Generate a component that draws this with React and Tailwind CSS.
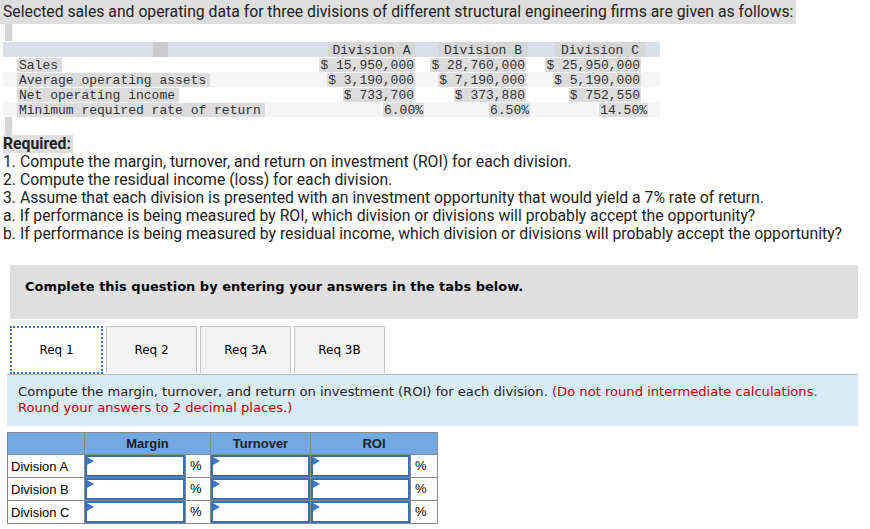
import React from "react";

const rows = [
  { label: "Sales", a: "$ 15,950,000", b: "$ 28,760,000", c: "$ 25,950,000", alt: false },
  { label: "Average operating assets", a: "$ 3,190,000", b: "$ 7,190,000", c: "$ 5,190,000", alt: true },
  { label: "Net operating income", a: "$ 733,700", b: "$ 373,880", c: "$ 752,550", alt: false },
  { label: "Minimum required rate of return", a: "6.00%", b: "6.50%", c: "14.50%", alt: true, pct: true },
];

const lines = [
  "1. Compute the margin, turnover, and return on investment (ROI) for each division.",
  "2. Compute the residual income (loss) for each division.",
  "3. Assume that each division is presented with an investment opportunity that would yield a 7% rate of return.",
  "a. If performance is being measured by ROI, which division or divisions will probably accept the opportunity?",
  "b. If performance is being measured by residual income, which division or divisions will probably accept the opportunity?",
];

const tabs = ["Req 1", "Req 2", "Req 3A", "Req 3B"];

function AnswerInput() {
  return (
    <div className="relative h-full border-2 border-[#3d6fb0] bg-white">
      <svg className="absolute left-0 top-0" width="7" height="8" viewBox="0 0 7 8">
        <polygon points="0,0 7,4 0,8" fill="#3b78c9" />
      </svg>
    </div>
  );
}

export default function App() {
  return (
    <div className="w-[870px] h-[529px] overflow-hidden bg-white text-[#222]">
      {/* intro */}
      <div className="font-['Roboto',sans-serif] text-[15.75px] leading-6 whitespace-nowrap">
        <span className="inline-block bg-[#dedede] pl-[3px] pr-[3px]">
          Selected sales and operating data for three divisions of different structural engineering firms are given as follows:
        </span>
      </div>
      <div className="ml-[5px] w-[7px] h-[17px] bg-[#d6d6d6]" />

      {/* data table */}
      <div className="mt-[1px] ml-[3px] w-[657px] font-['Liberation_Mono',monospace] text-[13px] leading-[15px] text-[#333] whitespace-nowrap">
        <div className="flex h-[15px] bg-[#dadfea]">
          <div className="w-[150px]" />
          <div className="w-[15px] bg-[#c9c9c9]" />
          <div className="w-[160px]" />
          <div className="w-[87px] bg-[#d6d6d6] text-center pt-[1px]">Division A</div>
          <div className="w-[23px]" />
          <div className="w-[90px] bg-[#d6d6d6] text-center pt-[1px]">Division B</div>
          <div className="w-[27px]" />
          <div className="w-[90px] bg-[#d6d6d6] text-center pt-[1px]">Division C</div>
        </div>
        {rows.map((r) => (
          <div key={r.label} className={`flex h-[15px] pt-[1px] ${r.alt ? "bg-[#f5f5f5]" : "bg-white"}`}>
            <div className="w-[316px] shrink-0 pl-[14px]">
              <span className="inline-block h-[14px] bg-[#dcdcdc] pl-[2px] pr-[4px]">{r.label}</span>
            </div>
            <div className={`shrink-0 text-right ${r.pct ? "w-[105px]" : "w-[96px]"}`}>
              <span className="inline-block h-[14px] bg-[#dcdcdc] pl-[1px] pr-[1px]">{r.a}</span>
            </div>
            <div className={`shrink-0 text-right ${r.pct ? "w-[106px]" : "w-[111px]"}`}>
              <span className="inline-block h-[14px] bg-[#dcdcdc] pl-[1px] pr-[1px]">{r.b}</span>
            </div>
            <div className={`shrink-0 text-right ${r.pct ? "w-[118px]" : "w-[115px]"}`}>
              <span className="inline-block h-[14px] bg-[#dcdcdc] pl-[1px] pr-[1px]">{r.c}</span>
            </div>
          </div>
        ))}
      </div>
      <div className="ml-[5px] w-[7px] h-[18px] bg-[#d6d6d6]" />

      {/* required */}
      <div className="font-['Roboto',sans-serif] text-[15.75px] leading-[18px] pl-[3px] whitespace-nowrap">
        <div>
          <span className="inline-block bg-[#dedede] font-bold pr-[2px]">Required:</span>
        </div>
        {lines.map((l) => (
          <div key={l}>{l}</div>
        ))}
      </div>

      {/* tabs area */}
      <div className="mt-[22px] ml-[10px] w-[848px] h-[54px] bg-[#e0e0e0] pl-[15px] pt-[12px] font-['DejaVu_Sans',sans-serif] font-bold text-[13px] text-black">
        Complete this question by entering your answers in the tabs below.
      </div>

      <div className="mt-[7px] ml-[10px] flex gap-[2px] font-['DejaVu_Sans',sans-serif] text-[12px] text-black">
        {tabs.map((t, i) => (
          <div
            key={t}
            className={
              i === 0
                ? "w-[93px] h-[48px] flex items-center justify-center bg-white border-2 border-dotted border-[#3a72c4]"
                : "w-[91px] h-[47px] flex items-center justify-center bg-[#f2f2f2] border border-b-0 border-[#c4c4c4] ml-[1px]"
            }
          >
            {t}
          </div>
        ))}
      </div>

      <div className="ml-[7px] w-[851px] h-[52px] bg-[#d7ebf9] border-t border-[#b8b8b8] pl-[11px] pt-[9px] font-['DejaVu_Sans',sans-serif] text-[13.1px] leading-[16px] text-[#222] whitespace-nowrap">
        Compute the margin, turnover, and return on investment (ROI) for each division.{" "}
        <span className="text-[#c40000]">
          (Do not round intermediate calculations.
          <br />
          Round your answers to 2 decimal places.)
        </span>
      </div>

      {/* answer table */}
      <table className="mt-[6px] ml-[7px] border-collapse font-['Liberation_Sans',sans-serif] text-[13px] text-black">
        <thead>
          <tr className="h-[22px] bg-[#72a9e3]">
            <th className="w-[77px] border border-[#8a8a8a]" />
            <th colSpan={2} className="border border-[#8a8a8a] font-bold text-[#222]">Margin</th>
            <th className="w-[100px] border border-[#8a8a8a] font-bold text-[#222]">Turnover</th>
            <th colSpan={2} className="border border-[#8a8a8a] font-bold text-[#222]">ROI</th>
          </tr>
        </thead>
        <tbody>
          {["Division A", "Division B", "Division C"].map((d) => (
            <tr key={d} className="h-[23px]">
              <td className="w-[77px] border border-[#8a8a8a] pl-[3px] leading-none">{d}</td>
              <td className="w-[101px] h-[23px] border border-[#8a8a8a] p-0">
                <AnswerInput />
              </td>
              <td className="w-[25px] border border-[#8a8a8a] pl-[4px]">%</td>
              <td className="w-[100px] h-[23px] border border-[#8a8a8a] p-0">
                <AnswerInput />
              </td>
              <td className="w-[100px] h-[23px] border border-[#8a8a8a] p-0">
                <AnswerInput />
              </td>
              <td className="w-[27px] border border-[#8a8a8a] pl-[4px]">%</td>
            </tr>
          ))}
        </tbody>
      </table>
    </div>
  );
}
